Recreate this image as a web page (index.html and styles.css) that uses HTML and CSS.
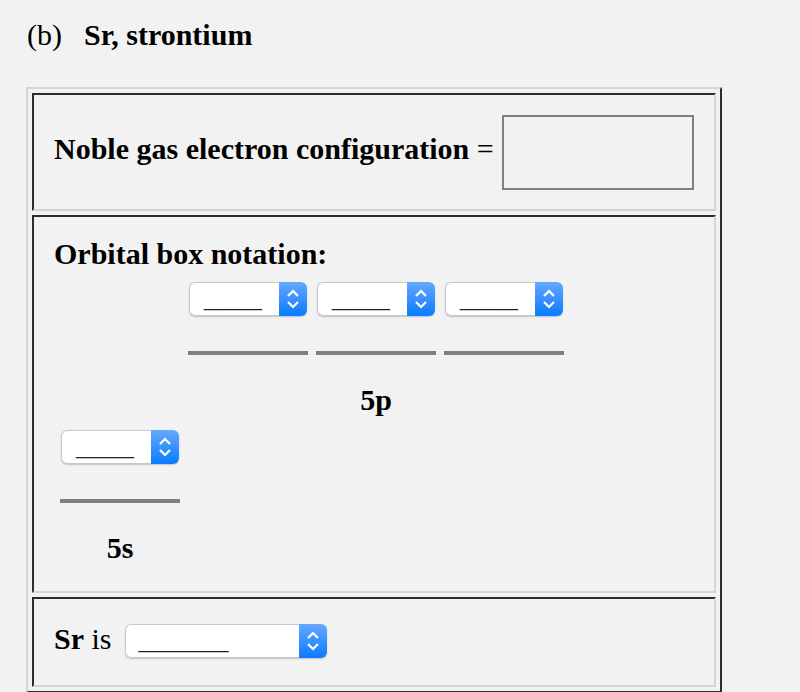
FILE: index.html
```html
<!DOCTYPE html>
<html>
<head>
<meta charset="utf-8">
<link rel="stylesheet" href="styles.css">
</head>
<body>
<div class="title"><span class="part">(b)</span><b>Sr, strontium</b></div>
<div class="frame">
  <div class="cell cell-config">
    <span class="prompt"><b>Noble gas electron configuration</b> =</span>
    <span class="answer-box"></span>
  </div>
  <div class="cell cell-orbitals">
    <div class="head"><b>Orbital box notation:</b></div>
    <div class="subshell subshell-5p">
      <div class="slots">
        <div class="slot">
          <div class="select"><span class="select-text">______</span><span class="select-arrow"><svg width="28" height="34" viewBox="0 0 28 34"><path d="M9 14 L14 9 L19 14 M9 20 L14 25 L19 20" fill="none" stroke="#fff" stroke-width="2.2"/></svg></span></div>
          <div class="orbital-line"></div>
        </div>
        <div class="slot">
          <div class="select"><span class="select-text">______</span><span class="select-arrow"><svg width="28" height="34" viewBox="0 0 28 34"><path d="M9 14 L14 9 L19 14 M9 20 L14 25 L19 20" fill="none" stroke="#fff" stroke-width="2.2"/></svg></span></div>
          <div class="orbital-line"></div>
        </div>
        <div class="slot">
          <div class="select"><span class="select-text">______</span><span class="select-arrow"><svg width="28" height="34" viewBox="0 0 28 34"><path d="M9 14 L14 9 L19 14 M9 20 L14 25 L19 20" fill="none" stroke="#fff" stroke-width="2.2"/></svg></span></div>
          <div class="orbital-line"></div>
        </div>
      </div>
      <div class="label">5p</div>
    </div>
    <div class="subshell subshell-5s">
      <div class="slots">
        <div class="slot">
          <div class="select"><span class="select-text">______</span><span class="select-arrow"><svg width="28" height="34" viewBox="0 0 28 34"><path d="M9 14 L14 9 L19 14 M9 20 L14 25 L19 20" fill="none" stroke="#fff" stroke-width="2.2"/></svg></span></div>
          <div class="orbital-line"></div>
        </div>
      </div>
      <div class="label">5s</div>
    </div>
  </div>
  <div class="cell cell-class">
    <span class="prompt-sr"><b>Sr</b> is</span>
    <div class="select select-wide"><span class="select-text">__________</span><span class="select-arrow"><svg width="28" height="34" viewBox="0 0 28 34"><path d="M9 14 L14 9 L19 14 M9 20 L14 25 L19 20" fill="none" stroke="#fff" stroke-width="2.2"/></svg></span></div>
  </div>
</div>
</body>
</html>
```

FILE: styles.css
```css
html, body {
  margin: 0;
  padding: 0;
  background: #f2f2f2;
}
body {
  font-family: "Liberation Serif", "Times New Roman", serif;
  font-size: 30px;
  line-height: 34px;
  color: #000;
  overflow: hidden;
}
b { font-weight: bold; }

.title {
  padding-top: 18px;
  padding-left: 27px;
  height: 34px;
}
.part {
  display: inline-block;
  width: 57px;
}

.frame {
  box-sizing: border-box;
  margin-top: 35px;
  margin-left: 26px;
  width: 696px;
  border: 2px solid;
  border-color: #d4d4d4 #2c2c2c #2c2c2c #d4d4d4;
  padding: 4px;
  display: flex;
  flex-direction: column;
  gap: 4px;
}
.cell {
  box-sizing: border-box;
  border: 2px solid;
  border-color: #2c2c2c #d4d4d4 #d4d4d4 #2c2c2c;
  padding: 0 20px;
}

.cell-config {
  height: 118px;
  display: flex;
  align-items: flex-start;
}
.prompt {
  margin-top: 37px;
  white-space: nowrap;
}
.answer-box {
  box-sizing: border-box;
  width: 192px;
  height: 75px;
  margin-top: 20px;
  margin-left: 8px;
  border: 2px solid #808080;
}

.cell-orbitals {
  height: 378px;
  padding-top: 20px;
}
.subshell {
  display: flex;
  flex-direction: column;
  width: fit-content;
}
.subshell-5p {
  margin-top: 11px;
  margin-left: 134px;
}
.subshell-5s {
  margin-top: 13px;
  margin-left: 6px;
}
.slots {
  display: flex;
  gap: 8px;
}
.slot {
  width: 120px;
  display: flex;
  flex-direction: column;
  align-items: center;
}
.orbital-line {
  width: 120px;
  height: 4px;
  background: #808080;
  margin-top: 35px;
}
.label {
  margin-top: 28px;
  text-align: center;
  font-weight: bold;
}

.select {
  box-sizing: border-box;
  width: 118px;
  height: 34px;
  display: flex;
  border-radius: 6px;
  box-shadow: 0 1px 1.5px rgba(0, 0, 0, 0.2);
  font-family: "Liberation Sans", Arial, sans-serif;
  font-size: 17.4px;
  color: #222;
}
.select-text {
  box-sizing: border-box;
  flex: 1;
  background: #fff;
  border: 1px solid #c8c8c8;
  border-right: 0;
  border-radius: 6px 0 0 6px;
  padding-left: 14px;
  padding-top: 3px;
  line-height: 30px;
  white-space: nowrap;
  overflow: hidden;
}
.select-arrow {
  width: 28px;
  height: 34px;
  flex: none;
  border-radius: 0 6px 6px 0;
  background: linear-gradient(#66a8ff, #0a7bff);
}
.select-arrow svg { display: block; }

.cell-class {
  height: 90px;
  display: flex;
  align-items: flex-start;
}
.prompt-sr {
  margin-top: 23px;
  white-space: nowrap;
}
.select-wide {
  width: 202px;
  margin-top: 25px;
  margin-left: 13px;
  font-size: 16.2px;
}
.select-wide .select-text {
  padding-left: 13px;
}
```
